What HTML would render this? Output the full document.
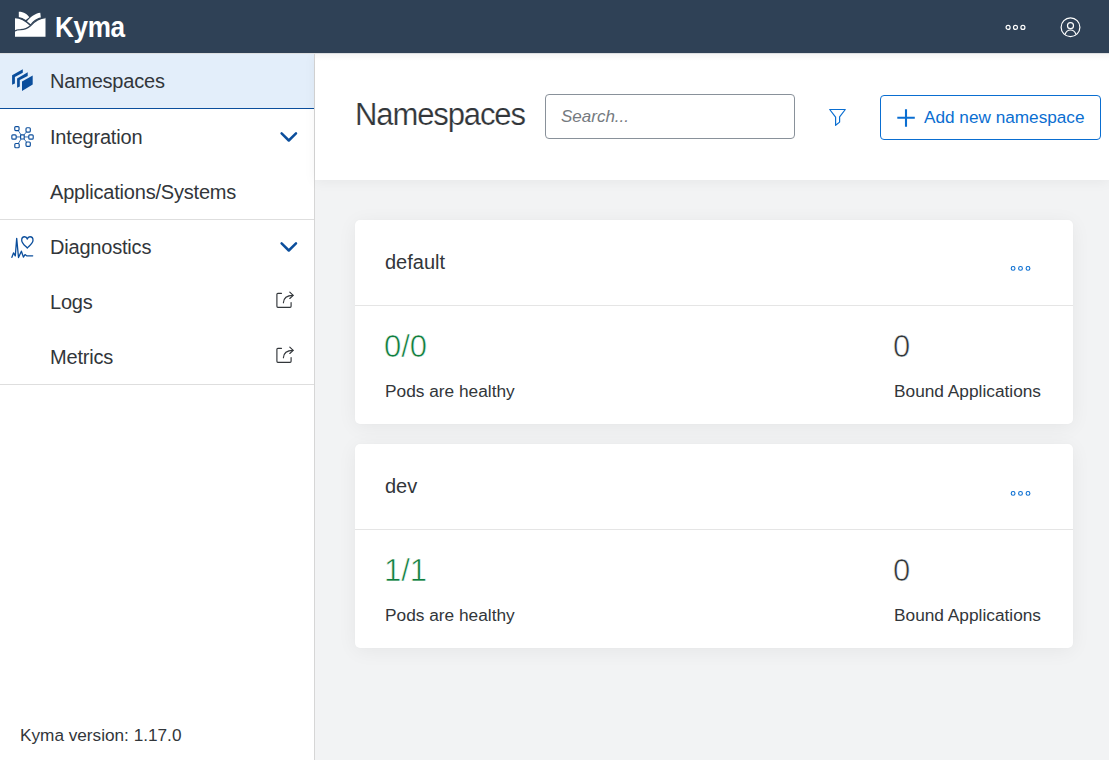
<!DOCTYPE html>
<html><head><meta charset="utf-8">
<style>
*{box-sizing:border-box;margin:0;padding:0}
html,body{width:1109px;height:760px;overflow:hidden;background:#fff;font-family:"Liberation Sans",sans-serif;color:#32363a}
svg{position:absolute;display:block;overflow:visible}
.shell{position:absolute;left:0;top:0;width:1109px;height:53px;background:#2f4156;z-index:5;box-shadow:0 1px 0 #dcdee0}
.brand{position:absolute;left:55px;top:10.5px;color:#fff;font-weight:bold;font-size:29px;letter-spacing:-0.4px;line-height:32px;transform:scaleX(0.9);transform-origin:0 0}
.side{position:absolute;left:0;top:53px;width:315px;height:707px;background:#fff;border-right:1px solid #d6d6d6}
.t{position:absolute;left:50px;font-size:20px;line-height:24px;letter-spacing:-0.2px;color:#32363a;white-space:nowrap}
.sel{position:absolute;left:0;top:0;width:314px;height:56px;background:#e3eefa;border-bottom:1px solid #0b4e9c}
.hr{position:absolute;left:0;width:314px;height:1px;background:#dedede}
.topsh{position:absolute;left:0;top:0;width:794px;height:8px;background:linear-gradient(rgba(0,0,0,0.045),rgba(0,0,0,0));z-index:2}
.ver{position:absolute;left:20px;top:725px;font-size:17.2px;line-height:20px;color:#32363a;white-space:nowrap}
.main{position:absolute;left:315px;top:53px;width:794px;height:707px;background:#f2f3f4}
.head{position:absolute;left:0;top:0;width:794px;height:127px;background:#fff;box-shadow:0 2px 12px rgba(0,0,0,0.05)}
.title{position:absolute;left:40px;top:44px;font-size:31px;line-height:36px;letter-spacing:-1.1px;color:#32363a;white-space:nowrap;-webkit-text-stroke:0.2px #fff}
.search{position:absolute;left:230px;top:41px;width:250px;height:45px;border:1px solid #89919a;border-radius:4px;background:#fff}
.search span{position:absolute;left:15px;top:11px;font-size:17px;line-height:22px;font-style:italic;color:#757a80}
.btn{position:absolute;left:565px;top:42px;width:221px;height:45px;border:1px solid #0a6ed1;border-radius:4px;color:#0a6ed1;background:#fff}
.btn span{position:absolute;left:43px;top:10px;font-size:17.2px;line-height:22px;white-space:nowrap}
.card{position:absolute;left:40px;width:718px;height:204px;background:#fff;border-radius:5px;box-shadow:0 0 2px rgba(0,0,0,0.025),0 3px 20px rgba(0,0,0,0.055)}
.card .name{position:absolute;left:30px;top:30px;font-size:20px;line-height:24px;color:#32363a}
.card .div{position:absolute;left:0;top:85px;width:100%;height:1px;background:#e5e5e5}
.card .num{position:absolute;top:109px;font-size:31px;line-height:36px;color:#32363a;-webkit-text-stroke:0.6px #fff}
.card .lbl{position:absolute;top:160px;font-size:17.3px;line-height:22px;color:#32363a;white-space:nowrap}
</style></head>
<body>
<div class="shell">
  <!-- Kyma logo -->
  <svg style="left:10px;top:8px" width="40" height="36" viewBox="0 0 40 36">
    <path fill="#fff" d="M5,9.7 C11,9.6 16,13 20.3,17.5 C24,13.5 29,9.8 35.5,9.7 L35.5,28.7 L5,28.7 Z"/>
    <path fill="#fff" d="M8.8,3.8 C14,3.8 17.5,6.5 19.3,9.2 L15.8,12 C13.5,10.2 11,9.4 8.8,9.2 Z"/>
    <path fill="#fff" d="M16.8,13.3 C20,9.5 25,5.2 30.3,4.7 L30.8,9.6 C26,10.2 23,13.5 20.5,16.3 Z"/>
    <path fill="none" stroke="#2f4156" stroke-width="1.2" d="M5,23.2 C6,22 8,21.6 10.5,21.6 C15,21.5 18,20 20.5,17.8 C24,14 28,10.2 35.5,9.7"/>
    <path fill="none" stroke="#2f4156" stroke-width="1.2" d="M5,9.6 C11,9.7 16,13 20.6,17.6"/>
  </svg>
  <div class="brand">Kyma</div>
  <!-- overflow -->
  <svg style="left:1000px;top:12px" width="30" height="30" viewBox="0 0 30 30">
    <g fill="none" stroke="#fff" stroke-width="1.2"><circle cx="8.1" cy="15.4" r="2"/><circle cx="15.5" cy="15.4" r="2"/><circle cx="22.9" cy="15.4" r="2"/></g>
  </svg>
  <!-- user -->
  <svg style="left:1055px;top:12px" width="30" height="30" viewBox="0 0 30 30">
    <g fill="none" stroke="#fff" stroke-width="1.2">
      <circle cx="15.5" cy="15.2" r="9.4"/>
      <circle cx="15.5" cy="13.7" r="3"/>
      <path d="M10.1,22.3 C11,19.4 13,18 15.5,18 C18,18 20,19.4 20.9,22.3"/>
    </g>
  </svg>
</div>

<div class="side">
  <div class="sel"></div>
  <!-- namespaces icon -->
  <svg style="left:8px;top:13px" width="30" height="30" viewBox="0 0 30 30">
    <g fill="#0b4e9c">
      <path d="M14,15.4 L24.7,9.5 L24.7,18.6 L14,24.9 Z"/>
      <path d="M9.1,12.4 L19.7,6.3 L19.7,9.9 L11.8,14 L11.8,20.5 L9.1,21.7 Z"/>
      <path d="M4.1,9.3 L14.8,3.2 L14.8,6.8 L6.9,10.9 L6.9,17.4 L4.1,18.7 Z"/>
    </g>
  </svg>
  <div class="t" style="top:16px">Namespaces</div>

  <!-- integration icon -->
  <svg style="left:8px;top:69px" width="30" height="30" viewBox="0 0 30 30">
    <g stroke="#0b4e9c" fill="none">
      <g stroke-width="0.8">
        <line x1="14.4" y1="14.9" x2="8.9" y2="6.5"/><line x1="14.4" y1="14.9" x2="20.1" y2="7.9"/>
        <line x1="14.4" y1="14.9" x2="6" y2="15"/><line x1="14.4" y1="14.9" x2="23" y2="15"/>
        <line x1="14.4" y1="14.9" x2="9" y2="23.6"/><line x1="14.4" y1="14.9" x2="20.1" y2="22.1"/>
      </g>
      <g stroke-width="1.15" fill="#fff">
        <rect x="6.75" y="4.55" width="4.3" height="4.0" rx="1"/>
        <rect x="18" y="5.75" width="4.3" height="4.3" rx="1"/>
        <rect x="3.85" y="12.85" width="4.3" height="4.3" rx="1"/>
        <rect x="20.8" y="12.85" width="4.4" height="4.3" rx="1"/>
        <rect x="6.8" y="21.5" width="4.4" height="4.2" rx="1"/>
        <rect x="18" y="20" width="4.3" height="4.3" rx="1"/>
        <rect x="12.6" y="12.85" width="3.6" height="4.1" rx="0.6"/>
      </g>
    </g>
  </svg>
  <div class="t" style="top:72px">Integration</div>
  <svg style="left:260px;top:57px" width="60" height="60" viewBox="0 0 60 60">
    <path d="M21.6,23.4 L28.8,30.5 L36,23.4" fill="none" stroke="#0b4e9c" stroke-width="2.5" stroke-linecap="round" stroke-linejoin="round"/>
  </svg>
  <div class="t" style="top:127px">Applications/Systems</div>
  <div class="hr" style="top:166px"></div>

  <!-- diagnostics icon -->
  <svg style="left:8px;top:179px" width="30" height="30" viewBox="0 0 30 30">
    <g fill="none" stroke="#0b4e9c" stroke-width="1.3" stroke-linejoin="round" stroke-linecap="round">
      <path d="M3.9,25.3 L5.5,20.9 L7.3,23.9 L8.7,6.4 L10.5,25.5 L13.4,19.2 L15.4,25.1 L17,22.6 L18.6,23.8 L24.7,23.8"/>
      <path d="M19.3,16 C17.2,13.8 13.7,11.3 13.7,8.2 C13.7,6.1 15,4.75 16.6,4.75 C18,4.75 19,5.8 19.3,7 C19.6,5.8 20.6,4.75 22,4.75 C23.6,4.75 25,6.1 25,8.2 C25,11.3 21.4,13.8 19.3,16 Z"/>
    </g>
  </svg>
  <div class="t" style="top:182px">Diagnostics</div>
  <svg style="left:260px;top:167px" width="60" height="60" viewBox="0 0 60 60">
    <path d="M21.6,23.4 L28.8,30.5 L36,23.4" fill="none" stroke="#0b4e9c" stroke-width="2.5" stroke-linecap="round" stroke-linejoin="round"/>
  </svg>

  <div class="t" style="top:237px">Logs</div>
  <svg style="left:270px;top:232px" width="30" height="30" viewBox="0 0 30 30">
    <g fill="none" stroke="#32363a" stroke-width="1.15" stroke-linecap="round" stroke-linejoin="round">
      <path d="M11.5,8.3 L7.9,8.3 Q6.9,8.3 6.9,9.3 L6.9,21.3 Q6.9,22.3 7.9,22.3 L20.1,22.3 Q21.1,22.3 21.1,21.3 L21.1,17.6"/>
      <path d="M13.4,17.8 C13.6,13 17,10.3 23,10.3"/>
      <path d="M19.8,7.2 L23.2,10.3 L19.8,13.5"/>
    </g>
  </svg>
  <div class="t" style="top:292px">Metrics</div>
  <svg style="left:270px;top:287px" width="30" height="30" viewBox="0 0 30 30">
    <g fill="none" stroke="#32363a" stroke-width="1.15" stroke-linecap="round" stroke-linejoin="round">
      <path d="M11.5,8.3 L7.9,8.3 Q6.9,8.3 6.9,9.3 L6.9,21.3 Q6.9,22.3 7.9,22.3 L20.1,22.3 Q21.1,22.3 21.1,21.3 L21.1,17.6"/>
      <path d="M13.4,17.8 C13.6,13 17,10.3 23,10.3"/>
      <path d="M19.8,7.2 L23.2,10.3 L19.8,13.5"/>
    </g>
  </svg>
  <div class="hr" style="top:331px"></div>
</div>
<div class="ver">Kyma version: 1.17.0</div>

<div class="main">
  <div class="head"><div class="topsh"></div>
    <div class="title">Namespaces</div>
    <div class="search"><span>Search...</span></div>
    <svg style="left:507px;top:49px" width="30" height="30" viewBox="0 0 30 30">
      <path d="M7.7,7.5 L23.3,7.5 L17.6,14.8 L17.6,20.1 L13.6,23.3 L13.6,15.2 Z" fill="none" stroke="#0a6ed1" stroke-width="1.2" stroke-linejoin="round"/>
    </svg>
    <div class="btn">
      <svg style="left:15px;top:12px" width="20" height="20" viewBox="0 0 20 20">
        <path d="M1.3,9.8 L18.8,9.8 M10,1.2 L10,18.8" stroke="#0a6ed1" stroke-width="2.1"/>
      </svg>
      <span>Add new namespace</span>
    </div>
  </div>

  <div class="card" style="top:167px">
    <div class="name">default</div>
    <svg style="left:650px;top:33px" width="30" height="30" viewBox="0 0 30 30">
      <g fill="none" stroke="#0a6ed1" stroke-width="1.1"><circle cx="8.1" cy="15.4" r="1.9"/><circle cx="15.5" cy="15.4" r="1.9"/><circle cx="23" cy="15.4" r="1.9"/></g>
    </svg>
    <div class="div"></div>
    <div class="num" style="left:29px;color:#107e3e">0/0</div>
    <div class="lbl" style="left:30px">Pods are healthy</div>
    <div class="num" style="left:538px">0</div>
    <div class="lbl" style="left:539px">Bound Applications</div>
  </div>

  <div class="card" style="top:391px">
    <div class="name">dev</div>
    <svg style="left:650px;top:34px" width="30" height="30" viewBox="0 0 30 30">
      <g fill="none" stroke="#0a6ed1" stroke-width="1.1"><circle cx="8.1" cy="15.4" r="1.9"/><circle cx="15.5" cy="15.4" r="1.9"/><circle cx="23" cy="15.4" r="1.9"/></g>
    </svg>
    <div class="div"></div>
    <div class="num" style="left:29px;color:#107e3e">1/1</div>
    <div class="lbl" style="left:30px">Pods are healthy</div>
    <div class="num" style="left:538px">0</div>
    <div class="lbl" style="left:539px">Bound Applications</div>
  </div>
</div>
</body></html>
